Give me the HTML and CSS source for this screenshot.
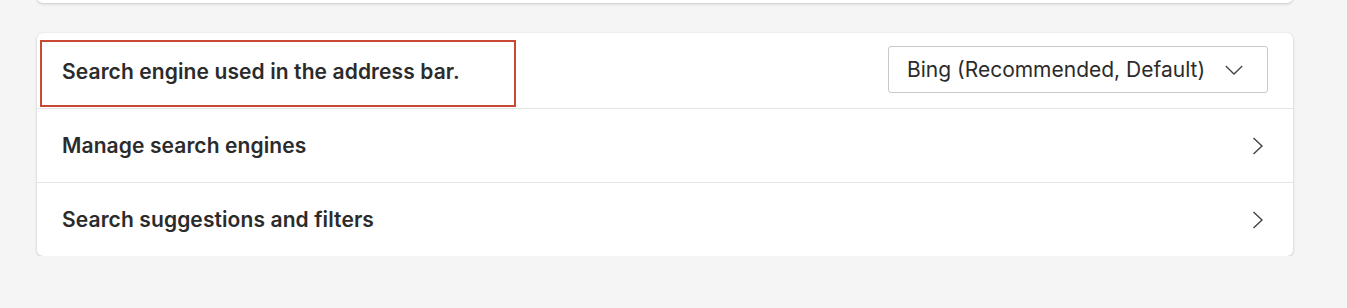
FILE: index.html
```html
<!DOCTYPE html>
<html>
<head>
<meta charset="utf-8">
<link rel="stylesheet" href="styles.css">
</head>
<body>
<div class="page">
  <div class="card card-prev"></div>
  <div class="card">
    <div class="row row-first">
      <div class="highlight"><span class="label">Search engine used in the address bar.</span></div>
      <div class="select">
        <span class="select-text">Bing (Recommended, Default)</span>
        <svg class="select-chev" width="18" height="10" viewBox="0 0 18 10"><path d="M0.8 1 L9 9 L17.2 1" fill="none" stroke="#444" stroke-width="1.3"/></svg>
      </div>
    </div>
    <div class="row">
      <span class="label">Manage search engines</span>
      <svg class="chev" width="12" height="18" viewBox="0 0 12 18"><path d="M1.5 1 L10 9 L1.5 17" fill="none" stroke="#444" stroke-width="1.4"/></svg>
    </div>
    <div class="row">
      <span class="label">Search suggestions and filters</span>
      <svg class="chev" width="12" height="18" viewBox="0 0 12 18"><path d="M1.5 1 L10 9 L1.5 17" fill="none" stroke="#444" stroke-width="1.4"/></svg>
    </div>
  </div>
</div>
</body>
</html>
```

FILE: styles.css
```css
html, body {
  margin: 0;
  padding: 0;
  background: #f5f5f5;
}
body {
  font-family: Inter, "Noto Sans", sans-serif;
  color: #2b2b2b;
}
.page {
  padding-left: 37px;
  width: 1256px;
}
.card {
  background: #fff;
  border-radius: 6px;
  box-shadow: 0 1px 3px rgba(0,0,0,0.18), 0 0 1px rgba(0,0,0,0.08);
  margin-top: 30px;
}
.card-prev {
  height: 40px;
  margin-top: -37px;
}
.row {
  height: 73px;
  display: flex;
  align-items: center;
  justify-content: space-between;
  padding: 0 29px 0 25px;
  border-top: 1px solid #e6e6e6;
}
.row-first {
  height: 75px;
  border-top: none;
  padding-left: 3px;
  padding-right: 25px;
}
.highlight {
  width: 476px;
  height: 67px;
  border: 2px solid #c94a33;
  display: flex;
  align-items: center;
  padding: 0 0 5px 20px;
  box-sizing: border-box;
  margin-top: 7px;
  align-self: flex-start;
}
.label {
  font-size: 21px;
  font-weight: 600;
  letter-spacing: 0.1px;
}
.select {
  width: 380px;
  height: 47px;
  box-sizing: border-box;
  border: 1px solid #c8c8c8;
  border-radius: 3px;
  display: flex;
  align-items: center;
  justify-content: space-between;
  padding: 0 24px 0 18px;
  margin-bottom: 2px;
}
.select-text {
  font-size: 21px;
  font-weight: 400;
  color: #2b2b2b;
}
.chev {
  display: block;
}
```
